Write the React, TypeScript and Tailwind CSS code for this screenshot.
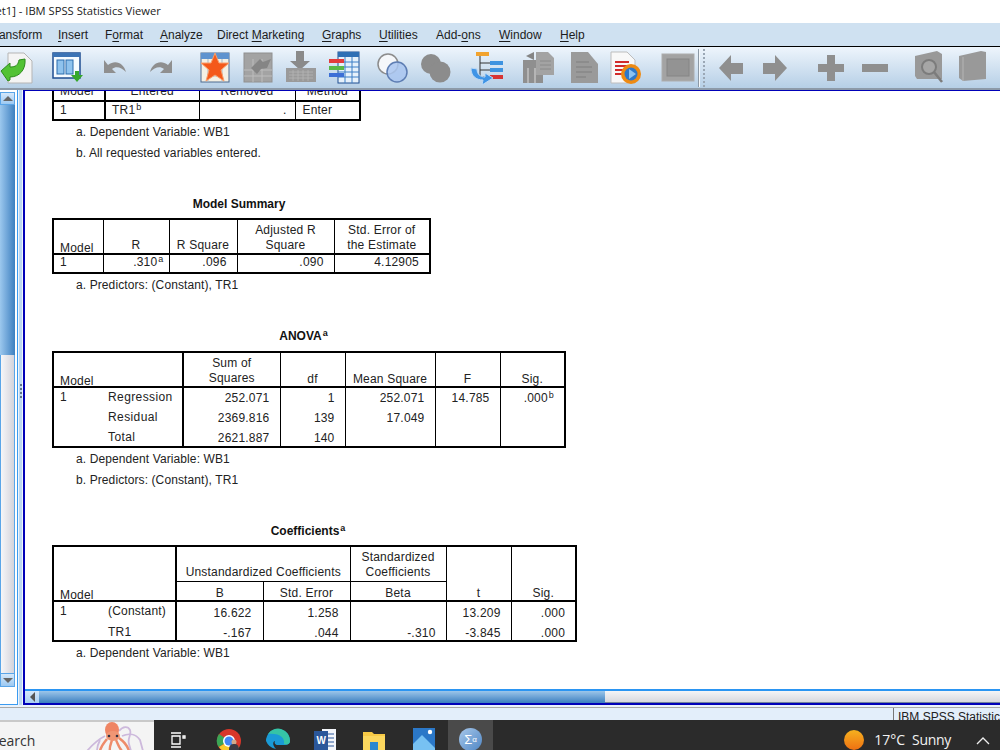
import React from "react";

const UL = ({ children }: any) => <span className="underline underline-offset-2">{children}</span>;

const menus = [
  { w: 58, el: <span className="-ml-[12px]">Transform</span> },
  { w: 47, el: <><UL>I</UL>nsert</> },
  { w: 55, el: <>F<UL>o</UL>rmat</> },
  { w: 57, el: <><UL>A</UL>nalyze</> },
  { w: 105, el: <>Direct <UL>M</UL>arketing</> },
  { w: 57, el: <><UL>G</UL>raphs</> },
  { w: 57, el: <><UL>U</UL>tilities</> },
  { w: 63, el: <>Add-<UL>o</UL>ns</> },
  { w: 61, el: <><UL>W</UL>indow</> },
  { w: 40, el: <><UL>H</UL>elp</> },
];

const Gray = "#8f8f8f";

const Ico = ({ w = 30, ml = 0, children }: any) => (
  <svg width={w} height="36" viewBox={`0 0 ${w} 36`} className="shrink-0" style={{ marginLeft: ml }}>
    {children}
  </svg>
);

const Toolbar = () => (
  <div className="h-[41px] bg-gradient-to-b from-[#eef5fc] to-[#b6cfe6] flex items-center overflow-hidden shrink-0">
    {/* open doc */}
    <Ico w={34}>
      <path d="M8 3h16l8 8v22H8z" fill="#f4f4f4" stroke="#b5b5b5" />
      <path d="M1 21l9-8v4c6 0 8-2 9-7l6-1c1 10-5 18-15 18v3l-2 1z" fill="#52c234" stroke="#2c8a1c" />
    </Ico>
    {/* window */}
    <Ico w={32} ml={17}>
      <rect x="2" y="3" width="27" height="25" fill="#f6fbff" stroke="#1f4e91" strokeWidth="1.5" />
      <rect x="2" y="3" width="27" height="4" fill="#3b73b5" />
      <rect x="6" y="10" width="7" height="14" fill="#8fc3ee" stroke="#2a6cad" />
      <rect x="15" y="10" width="7" height="14" fill="#8fc3ee" stroke="#2a6cad" />
      <path d="M20 25h4v-4h4v4h4l-6 7z" fill="#36a82c" />
    </Ico>
    {/* undo */}
    <Ico w={28} ml={19}>
      <path d="M2 10v13h12l-4-4c4-3 9-2 14 3 -2-8-10-13-18-7z" fill={Gray} />
    </Ico>
    {/* redo */}
    <Ico w={28} ml={16}>
      <path d="M26 10v13H14l4-4c-4-3-9-2-14 3 2-8 10-13 18-7z" fill={Gray} />
    </Ico>
    {/* pivot star */}
    <Ico w={30} ml={26}>
      <rect x="1" y="3" width="28" height="29" fill="#f4f0e4" stroke="#4d6a8f" />
      <rect x="1" y="3" width="28" height="6" fill="#5f93cf" />
      <path d="M8 14h14M8 20h14M8 26h14M8 9v23M22 9v23" stroke="#a9b7c6" />
      <path d="M15 3l4 10h10l-8 7 3 11-9-6-9 6 3-11-8-7h10z" fill="#f4591a" stroke="#f8a16e" />
    </Ico>
    {/* gray table */}
    <Ico w={32} ml={12}>
      <rect x="2" y="3" width="28" height="29" fill="#a3a3a3" stroke="#909090" />
      <path d="M2 20h28M2 26h28M11 9v23M20 9v23" stroke="#bdbdbd" />
      <path d="M9 18l9-9 3 3 8-3-4 9-6 1-4 5z" fill="#858585" />
    </Ico>
    {/* download */}
    <Ico w={32} ml={11}>
      <path d="M11 1h8v10h6l-10 9-10-9h6z" fill="#8a8a8a" />
      <rect x="1" y="18" width="30" height="14" fill="#9a9a9a" />
      <path d="M4 22h24M4 25h24M4 28h24M8 20v11M13 20v11M18 20v11M23 20v11" stroke="#b9b9b9" strokeWidth="0.7" />
    </Ico>
    {/* coloured table */}
    <Ico w={32} ml={11}>
      <rect x="10" y="2" width="21" height="31" fill="#e6f1fb" stroke="#1f4e91" />
      <rect x="10" y="2" width="21" height="5" fill="#2f6fb5" />
      <path d="M10 12h21M10 17h21M10 22h21M10 27h21M17 7v26M24 7v26" stroke="#3c7fc6" />
      <rect x="1" y="9" width="15" height="4" fill="#e23b3b" />
      <rect x="1" y="16" width="15" height="4" fill="#58b947" />
      <rect x="1" y="23" width="15" height="4" fill="#3c6fd6" />
    </Ico>
    {/* circles */}
    <Ico w={34} ml={16}>
      <circle cx="12" cy="14" r="10" fill="#f5f7fa" stroke="#8c8c8c" strokeWidth="1.5" />
      <circle cx="21" cy="22" r="10" fill="#a9c6f0" fillOpacity="0.85" stroke="#5d7db3" strokeWidth="1.5" />
    </Ico>
    {/* gray circles */}
    <Ico w={34} ml={9}>
      <circle cx="12" cy="14" r="10" fill="#8c8c8c" />
      <circle cx="21" cy="22" r="10.5" fill="#8c8c8c" />
    </Ico>
    {/* tree */}
    <Ico w={34} ml={17}>
      <rect x="6" y="2" width="13" height="4" fill="#f2a32e" />
      <rect x="20" y="11" width="13" height="4" fill="#3e93e0" />
      <rect x="20" y="18" width="13" height="4" fill="#3e93e0" />
      <rect x="20" y="25" width="13" height="4" fill="#d73434" />
      <path d="M10 6v21M10 13h10M10 20h10M10 27h10" stroke="#333" />
      <path d="M1 18c0 8 5 12 12 12l-1 5 11-7-8-5v4c-5 0-8-3-8-8z" fill="#3f94e6" stroke="#bcd9f5" />
    </Ico>
    {/* gray doc tree */}
    <Ico w={34} ml={18}>
      <rect x="1" y="10" width="20" height="23" fill="#8f8f8f" />
      <path d="M14 2h12l6 6v17H14z" fill="#a3a3a3" />
      <path d="M4 6l8-4v8z" fill="#858585" />
      <path d="M6 18v15M13 18v15" stroke="#b5b5b5" strokeWidth="2" />
      <path d="M18 11h11M18 15h11M18 19h11" stroke="#8a8a8a" />
    </Ico>
    {/* gray doc */}
    <Ico w={30} ml={13}>
      <path d="M2 2h17l10 12v19H2z" fill="#9a9a9a" />
      <path d="M7 12h13M7 17h16M7 22h16M7 27h10" stroke="#7f7f7f" />
    </Ico>
    {/* doc play */}
    <Ico w={34} ml={10}>
      <path d="M2 2h16l8 8v23H2z" fill="#f8f8f8" stroke="#bdbdbd" />
      <path d="M6 12h14M6 16h12M6 20h8M6 24h8" stroke="#d22b2b" strokeWidth="2" />
      <circle cx="22" cy="24" r="10" fill="#ee8a12" />
      <circle cx="22" cy="24" r="6.5" fill="#2e78c9" />
      <path d="M20 19l7 5-7 5z" fill="#8bc2f2" />
    </Ico>
    {/* gray square */}
    <Ico w={34} ml={18}>
      <rect x="1" y="4" width="32" height="27" fill="#a3a3a3" stroke="#adadad" />
      <rect x="6" y="9" width="22" height="17" fill="#939393" stroke="#858585" />
    </Ico>
    {/* separator and grip */}
    <div className="w-[2px] h-[38px] bg-[#8c99a6] ml-[3px] border-r border-[#f4f8fb] shrink-0" />
    <div className="w-[3px] h-[38px] ml-[3px] shrink-0 border-l-2 border-dotted border-[#9aa7b5]" />
    {/* arrows */}
    <Ico w={26} ml={12}>
      <path d="M1 18L13 5v8h12v11H13v7z" fill={Gray} />
    </Ico>
    <Ico w={26} ml={18}>
      <path d="M25 18L13 5v8H1v11h12v7z" fill={Gray} />
    </Ico>
    <Ico w={26} ml={30}>
      <path d="M9 5h8v9h9v8h-9v9H9v-9H0v-8h9z" fill={Gray} />
    </Ico>
    <Ico w={26} ml={18}>
      <rect x="0" y="14" width="26" height="8" fill={Gray} />
    </Ico>
    <Ico w={30} ml={26}>
      <path d="M1 6l22-5 5 3v25H3l-2-3z" fill="#999" />
      <circle cx="15" cy="17" r="7" fill="#a6a6a6" stroke="#7c7c7c" strokeWidth="2" />
      <path d="M20 22l8 10" stroke="#7c7c7c" strokeWidth="2.5" />
    </Ico>
    <Ico w={30} ml={14}>
      <path d="M1 6l22-5 5 1v27l-23 2-4-3z" fill="#999" />
      <path d="M5 7v24" stroke="#b5b5b5" />
    </Ico>
  </div>
);

const Note = ({ children, mt = 0 }: any) => (
  <p className="ml-[76px] h-[21px] leading-[21px] text-[12px] tracking-[0.1px] text-[#222]" style={{ marginTop: mt }}>
    {children}
  </p>
);

const Title = ({ children, cls }: any) => (
  <p className={`font-bold text-[12px] leading-[16px] text-[#111] text-center ${cls}`}>{children}</p>
);

const base = "text-[12px] text-[#222] p-0 align-bottom tracking-[0.2px]";
const hd = `${base} leading-[15px]`;
const sd = `${base} leading-[13px]`;
const md = `${base} leading-[10px]`;
const bd = `${base} leading-[14px]`;
const Sup = ({ children }: any) => <sup className="text-[9px] leading-none -top-[4px] ml-[1px]">{children}</sup>;

const Summary = () => (
  <table className="ml-[52px] w-[379px] table-fixed border-collapse border-2 border-black">
    <colgroup>
      <col className="w-[50px]" /><col className="w-[66px]" /><col className="w-[68px]" /><col className="w-[97px]" /><col />
    </colgroup>
    <tbody>
      <tr className="h-[35px] border-b-2 border-black">
        <td className={`${md} pl-[6px] border-r border-black`}>Model</td>
        <td className={`${hd} text-center border-r border-black`}>R</td>
        <td className={`${hd} text-center border-r border-black`}>R Square</td>
        <td className={`${hd} text-center border-r border-black`}>Adjusted R<br />Square</td>
        <td className={`${hd} text-center`}>Std. Error of<br />the Estimate</td>
      </tr>
      <tr className="h-[19px]">
        <td className={`${bd} pl-[6px] pb-[3px] border-r border-black`}>1</td>
        <td className={`${bd} text-right pr-[5px] pb-[3px] border-r border-black`}>.310<Sup>a</Sup></td>
        <td className={`${bd} text-right pr-[10px] pb-[3px] border-r border-black`}>.096</td>
        <td className={`${bd} text-right pr-[10px] pb-[3px] border-r border-black`}>.090</td>
        <td className={`${bd} text-right pr-[10px] pb-[3px]`}>4.12905</td>
      </tr>
    </tbody>
  </table>
);

const anovaRows = [
  { cells: ["1", "Regression", "252.071", "1", "252.071", "14.785", ".000"], lb: "pb-[3px]", nb: "pb-[2px]" },
  { cells: ["", "Residual", "2369.816", "139", "17.049", "", ""], lb: "pb-[3px]", nb: "pb-[2px]" },
  { cells: ["", "Total", "2621.887", "140", "", "", ""], lb: "pb-[2px]", nb: "pb-[1px]" },
];

const Anova = () => (
  <table className="ml-[52px] w-[514px] table-fixed border-collapse border-2 border-black">
    <colgroup>
      <col className="w-[55px]" /><col className="w-[75px]" /><col className="w-[97px]" /><col className="w-[65px]" /><col className="w-[90px]" /><col className="w-[65px]" /><col />
    </colgroup>
    <tbody>
      <tr className="h-[35px] border-b-2 border-black">
        <td colSpan={2} className={`${md} pl-[6px] border-r-2 border-black`}>Model</td>
        <td className={`${hd} text-center border-r border-black`}>Sum of<br />Squares</td>
        <td className={`${sd} text-center border-r border-black`}>df</td>
        <td className={`${sd} text-center border-r border-black`}>Mean Square</td>
        <td className={`${sd} text-center border-r border-black`}>F</td>
        <td className={`${sd} text-center`}>Sig.</td>
      </tr>
      {anovaRows.map(({ cells: r, lb, nb }, i) => (
        <tr key={i} className="h-[20px]">
          <td className={`${bd} pl-[6px] ${lb}`}>{r[0]}</td>
          <td className={`${bd} tracking-[0.4px] ${lb} border-r-2 border-black`}>{r[1]}</td>
          <td className={`${bd} text-right pr-[10px] ${nb} border-r border-black`}>{r[2]}</td>
          <td className={`${bd} text-right pr-[10px] ${nb} border-r border-black`}>{r[3]}</td>
          <td className={`${bd} text-right pr-[10px] ${nb} border-r border-black`}>{r[4]}</td>
          <td className={`${bd} text-right pr-[10px] ${nb} border-r border-black`}>{r[5]}</td>
          <td className={`${bd} text-right pr-[10px] ${nb}`}>{r[6]}{i === 0 && <Sup>b</Sup>}</td>
        </tr>
      ))}
    </tbody>
  </table>
);

const coefRows = [
  { cells: ["1", "(Constant)", "16.622", "1.258", "", "13.209", ".000"], lb: "pb-[3px]", nb: "pb-[1px]" },
  { cells: ["", "TR1", "-.167", ".044", "-.310", "-3.845", ".000"], lb: "pb-[1px]", nb: "pb-0" },
];

const Coefficients = () => (
  <table className="ml-[52px] w-[525px] table-fixed border-collapse border-2 border-black">
    <colgroup>
      <col className="w-[55px]" /><col className="w-[68px]" /><col className="w-[87px]" /><col className="w-[87px]" /><col className="w-[96px]" /><col className="w-[65px]" /><col />
    </colgroup>
    <tbody>
      <tr className="h-[35px]">
        <td rowSpan={2} colSpan={2} className={`${md} pl-[6px] border-r-2 border-b-2 border-black`}>Model</td>
        <td colSpan={2} className={`${hd} text-center pb-[1px] border-r border-b border-black`}>Unstandardized Coefficients</td>
        <td className={`${hd} text-center pb-[1px] border-r border-b border-black`}>Standardized<br />Coefficients</td>
        <td rowSpan={2} className={`${sd} text-center border-r border-b-2 border-black`}>t</td>
        <td rowSpan={2} className={`${sd} text-center border-b-2 border-black`}>Sig.</td>
      </tr>
      <tr className="h-[20px]">
        <td className={`${sd} text-center border-r border-b-2 border-black`}>B</td>
        <td className={`${sd} text-center border-r border-b-2 border-black`}>Std. Error</td>
        <td className={`${sd} text-center border-r border-b-2 border-black`}>Beta</td>
      </tr>
      {coefRows.map(({ cells: r, lb, nb }, i) => (
        <tr key={i} className="h-[20px]">
          <td className={`${bd} pl-[6px] ${lb}`}>{r[0]}</td>
          <td className={`${bd} ${lb} border-r-2 border-black`}>{r[1]}</td>
          <td className={`${bd} text-right pr-[11px] ${nb} border-r border-black`}>{r[2]}</td>
          <td className={`${bd} text-right pr-[11px] ${nb} border-r border-black`}>{r[3]}</td>
          <td className={`${bd} text-right pr-[10px] ${nb} border-r border-black`}>{r[4]}</td>
          <td className={`${bd} text-right pr-[10px] ${nb} border-r border-black`}>{r[5]}</td>
          <td className={`${bd} text-right pr-[10px] ${nb}`}>{r[6]}</td>
        </tr>
      ))}
    </tbody>
  </table>
);

const FirstTable = () => (
  <table className="ml-[52px] w-[309px] table-fixed border-collapse border-2 border-t-0 border-black">
    <colgroup>
      <col className="w-[52px]" /><col className="w-[94px]" /><col className="w-[96px]" /><col />
    </colgroup>
    <tbody>
      <tr className="h-[10px] border-b-2 border-black">
        <td className={`${bd} pl-[6px] border-r-2 border-black`}><div className="h-[9px] pb-[2px] overflow-hidden flex items-end">Model</div></td>
        <td className={`${bd} text-center border-r border-black`}><div className="h-[9px] pb-[2px] overflow-hidden flex items-end justify-center">Entered</div></td>
        <td className={`${bd} text-center border-r border-black`}><div className="h-[9px] pb-[2px] overflow-hidden flex items-end justify-center">Removed</div></td>
        <td className={`${bd} text-center`}><div className="h-[9px] pb-[2px] overflow-hidden flex items-end justify-center">Method</div></td>
      </tr>
      <tr className="h-[19px]">
        <td className={`${bd} pl-[6px] pb-[2px] border-r-2 border-black`}>1</td>
        <td className={`${bd} pl-[6px] pb-[2px] border-r border-black`}>TR1<Sup>b</Sup></td>
        <td className={`${bd} text-right pr-[8px] pb-[2px] border-r border-black`}>.</td>
        <td className={`${bd} pl-[7px] pb-[2px]`}>Enter</td>
      </tr>
    </tbody>
  </table>
);

const LeftPane = () => (
  <div className="w-[18px] bg-white border-r border-b border-[#3b9bf0] flex flex-col shrink-0 pt-[2px] pb-[17px]">
    <div className="w-[15px] h-[13px] bg-gradient-to-b from-[#d5e8fa] to-[#9cc9f2] border border-[#5aa5e8] flex items-center justify-center">
      <div className="w-0 h-0 border-x-[5px] border-x-transparent border-b-[5px] border-b-[#666]" />
    </div>
    <div className="w-[15px] h-[250px] bg-gradient-to-r from-[#9cc8ee] to-[#3c80c0]" />
    <div className="w-[15px] flex-1 bg-gradient-to-r from-[#f6f6f8] to-[#d4d4dc] border-x border-[#5aa5e8]" />
    <div className="w-[15px] h-[14px] bg-gradient-to-b from-[#d5e8fa] to-[#9cc9f2] border border-[#5aa5e8] flex items-center justify-center">
      <div className="w-0 h-0 border-x-[5px] border-x-transparent border-t-[5px] border-t-[#666]" />
    </div>
  </div>
);

const Splitter = () => (
  <div className="w-[5px] bg-[#bcd8f2] border-x border-[#eef5fc] flex flex-col items-center justify-center shrink-0 pb-[14px]">
    <div className="w-[2px] h-[14px] border-l-2 border-dotted border-[#5f7488]" />
  </div>
);

const Output = () => (
  <div className="flex-1 min-w-0 border-l-2 border-t border-b-2 border-[#0000b8] flex flex-col bg-white">
    <div className="flex-1 min-h-0 overflow-hidden -ml-[25px]">
      <FirstTable />
      <Note mt={1}>a. Dependent Variable: WB1</Note>
      <Note>b. All requested variables entered.</Note>
      <Title cls="w-[380px] ml-[49px] mt-[32px] mb-[6px]">Model Summary</Title>
      <Summary />
      <Note mt={1}>a. Predictors: (Constant), TR1</Note>
      <Title cls="w-[503px] ml-[52px] mt-[32px] mb-[7px]">ANOVA<Sup>a</Sup></Title>
      <Anova />
      <Note mt={1}>a. Dependent Variable: WB1</Note>
      <Note>b. Predictors: (Constant), TR1</Note>
      <Title cls="w-[512px] ml-[52px] mt-[32px] mb-[6px]">Coefficients<Sup>a</Sup></Title>
      <Coefficients />
      <Note mt={1}>a. Dependent Variable: WB1</Note>
    </div>
    <div className="h-[14px] border-t-2 border-[#2b95f2] flex shrink-0">
      <div className="w-[14px] bg-gradient-to-b from-[#d5e8fa] to-[#a9d0f4] flex items-center justify-center">
        <div className="w-0 h-0 border-y-[5px] border-y-transparent border-r-[5px] border-r-[#555]" />
      </div>
      <div className="w-[566px] bg-gradient-to-b from-[#9cc6ea] to-[#3a7fbf]" />
      <div className="flex-1 bg-gradient-to-b from-[#f5f5f7] to-[#d8d8de] border-b border-[#70849a]" />
    </div>
  </div>
);

const Octopus = () => (
  <svg width="60" height="30" viewBox="0 0 60 30" className="absolute left-[86px] top-0">
    <g fill="none" stroke="#cdb9dc" strokeWidth="1.8">
      <path d="M19 14c-6 3-12 8-18 15" />
      <path d="M14 18c-2 4-3 7-3 11" />
      <path d="M33 9c4-5 9-5 11-1 2 5-3 8-1 14l2 7" />
      <path d="M36 14c7-3 14-2 18 4l3 11" />
    </g>
    <g fill="none" stroke="#ee8b6a" strokeWidth="2.4">
      <path d="M21 17c-3 4-6 7-7 12" />
      <path d="M26 18c-1 4-3 7-2 11" />
      <path d="M30 18c2 4 3 8 6 11" />
      <path d="M33 16c4 3 8 6 10 13" />
    </g>
    <ellipse cx="26" cy="8" rx="7" ry="8" fill="#ef8563" />
    <ellipse cx="27" cy="14" rx="7" ry="5" fill="#f09674" />
    <circle cx="23" cy="14" r="1.3" fill="#334" />
    <circle cx="31" cy="14" r="1.3" fill="#334" />
  </svg>
);

const Taskbar = () => (
  <div className="h-[30px] bg-[#2b2b2b] flex shrink-0 overflow-hidden">
    <div className="relative w-[154px] bg-[#f4f4f4] border-t-2 border-[#c9c9c9] overflow-hidden shrink-0">
      <span className="absolute -left-[9px] top-[9px] text-[14px] leading-[20px] text-[#333] [font-family:'Open_Sans',sans-serif]">Search</span>
      <Octopus />
    </div>
    <div className="flex items-start shrink-0">
      <svg width="16" height="18" viewBox="0 0 16 18" className="ml-[16px] mt-[12px]">
        <path d="M1 1h10M1 15h10M2 4h8v8H2z M13 4h2v2h-2z" fill="none" stroke="#fff" strokeWidth="1.3" />
      </svg>
      <svg width="26" height="30" viewBox="0 0 26 30" className="ml-[30px]">
        <circle cx="13" cy="21" r="12" fill="#d8362a" />
        <path d="M13 21L2.5 27A12 12 0 0 1 3 14z" fill="#3aa655" />
        <path d="M13 21l10 6a12 12 0 0 1-20 0z" fill="#f8c92c" />
        <circle cx="13" cy="21" r="6" fill="#fff" />
        <circle cx="13" cy="21" r="4.5" fill="#4286f5" />
        <circle cx="18" cy="22" r="2.5" fill="#cfa98c" />
        <path d="M13 30c0-5 2-6 5-6s5 1 5 6z" fill="#3a3a44" />
      </svg>
      <svg width="26" height="30" viewBox="0 0 26 30" className="ml-[23px]">
        <path d="M1 21a12 12 0 0 1 24 0c0 4-4 4-8 4h-4c-3 0-4-2-3-4 -2 0-3 4 1 8a13 13 0 0 1-10-8z" fill="#1a9ad6" />
        <path d="M3 14a12 12 0 0 1 22 7c0 3-3 4-6 3 1-6-4-11-16-10z" fill="#35c4a6" />
      </svg>
      <svg width="26" height="30" viewBox="0 0 26 30" className="ml-[22px]">
        <rect x="9" y="9" width="14" height="21" fill="#f3f6fb" />
        <path d="M14 14h7M14 18h7M14 22h7M14 26h7" stroke="#2b579a" />
        <rect x="1" y="11" width="14" height="19" fill="#2b579a" />
        <text x="3.5" y="24" fontSize="10" fontWeight="700" fill="#fff" fontFamily="Liberation Sans">W</text>
      </svg>
      <svg width="26" height="30" viewBox="0 0 26 30" className="ml-[22px]">
        <path d="M2 12h9l2 2h11v16H2z" fill="#f7c945" />
        <rect x="2" y="16" width="22" height="14" fill="#fbd75e" />
        <rect x="9" y="22" width="8" height="8" fill="#2a87d0" />
      </svg>
      <svg width="26" height="30" viewBox="0 0 26 30" className="ml-[24px]">
        <rect x="2" y="8" width="22" height="22" fill="#2b78c8" />
        <path d="M2 30V24l9-9 13 13v2z" fill="#77c1f2" />
        <circle cx="19" cy="12" r="2.2" fill="#fff" />
      </svg>
      <div className="w-[45px] h-[30px] ml-[11px] bg-[#4a4a4a] flex items-start justify-center pt-[8px]">
        <div className="w-[23px] h-[23px] rounded-full bg-gradient-to-br from-[#a8c8ea] to-[#4f86c4] text-white text-[13px] leading-[23px] text-center">Σ<span className="text-[8px] align-top">α</span></div>
      </div>
    </div>
    <div className="flex-1 flex items-start justify-end">
      <div className="w-[20px] h-[20px] mt-[10px] rounded-full bg-gradient-to-b from-[#f5b11f] to-[#ee6f12]" />
      <span className="ml-[10px] mt-[10px] text-[14px] leading-[20px] text-[#f2f2f2] [font-family:'Open_Sans',sans-serif]">17°C</span>
      <span className="ml-[7px] mt-[10px] text-[14px] leading-[20px] tracking-[-0.3px] text-[#f2f2f2] [font-family:'Open_Sans',sans-serif]">Sunny</span>
      <svg width="14" height="8" viewBox="0 0 14 8" className="ml-[25px] mr-[10px] mt-[17px]">
        <path d="M1 7l6-6 6 6" fill="none" stroke="#eee" strokeWidth="1.3" />
      </svg>
    </div>
  </div>
);

export default function App() {
  return (
    <div className="w-[1000px] h-[750px] overflow-hidden flex flex-col bg-white [font-family:'Liberation_Sans',Arial,sans-serif]">
      <div className="h-[23px] bg-white flex items-center shrink-0 overflow-hidden">
        <span className="-ml-[38px] text-[11.2px] text-[#222] whitespace-nowrap [font-family:'Open_Sans',sans-serif]">[Dataset1] - IBM SPSS Statistics Viewer</span>
      </div>
      <div className="h-[24px] bg-[#cfe1f1] border-b border-black flex items-center text-[12px] text-[#1c1c1c] shrink-0 overflow-hidden">
        {menus.map((m, i) => (
          <div key={i} className="shrink-0 whitespace-nowrap" style={{ width: m.w }}>
            {m.el}
          </div>
        ))}
      </div>
      <Toolbar />
      <div className="h-[2px] bg-[#8d9aa8] shrink-0" />
      <div className="flex-1 min-h-0 flex bg-[#d3e3f3]">
        <LeftPane />
        <Splitter />
        <Output />
      </div>
      <div className="h-[2px] bg-[#eaf2fb] shrink-0" />
      <div className="h-[13px] bg-[#e3eefa] border-t border-[#a9a9a9] flex justify-end shrink-0 overflow-hidden">
        <div className="w-[107px] border-l border-[#777] pl-[4px] pt-[2px] text-[12px] leading-[14px] text-[#222] whitespace-nowrap overflow-hidden">IBM SPSS Statistics Processor</div>
      </div>
      <Taskbar />
    </div>
  );
}
